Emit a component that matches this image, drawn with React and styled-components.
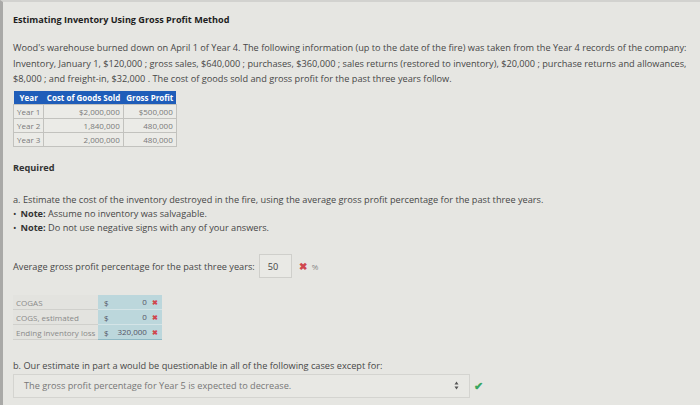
import React from 'react';
import styled, { createGlobalStyle } from 'styled-components';

const GlobalStyle = createGlobalStyle`
  html, body {
    margin: 0;
    padding: 0;
    background: #e4e4e0;
  }
`;

const Page = styled.div`
  width: 700px;
  height: 405px;
  box-sizing: border-box;
  border-left: 3px solid #a9a9a7;
  border-top: 2px solid #d2d2cf;
  padding: 11px 0 0 10px;
  font-family: "Open Sans", "Liberation Sans", sans-serif;
  font-size: 9.2px;
  color: #474747;
  overflow: hidden;
  background: #e6e6e2;
`;

const Title = styled.div`
  font-weight: 700;
  font-size: 9.1px;
  color: #1e1e1e;
  line-height: 14px;
`;

const Para = styled.p`
  margin: ${p => p.$mt || 0}px 0 0;
  line-height: 15.5px;
  color: ${p => p.$dark ? '#333' : '#474747'};
  font-weight: ${p => p.$bold ? 700 : 400};
`;

const DataTable = styled.table`
  border-collapse: collapse;
  margin-top: 4px;
  font-size: 8px;
  line-height: 13px;
`;

const Th = styled.th`
  background: #1f5db9;
  color: #fff;
  font-weight: 700;
  padding: 0 3px;
  text-align: center;
  white-space: nowrap;
`;

const Td = styled.td`
  border: 1px solid #c2c2be;
  background: #ebebe7;
  color: #7a7a7a;
  padding: 0 3px;
  height: 13px;
  text-align: ${p => p.$align || 'left'};
`;

const Notes = styled.div`
  margin-top: 18px;
  line-height: 14px;
`;

const NoteLine = styled.div`
  display: flex;
  gap: 4px;
  &::before {
    content: '•';
    color: #333;
  }
  b { color: #333; }
`;

const AvgRow = styled.div`
  display: flex;
  align-items: center;
  margin-top: 19px;
`;

const InputBox = styled.div`
  width: 33px;
  height: 24px;
  box-sizing: border-box;
  border: 1px solid #cfcfcb;
  background: #e9e9e5;
  margin-left: 4px;
  padding-left: 8px;
  display: flex;
  align-items: center;
  color: #444;
`;

const Mark = styled.span`
  color: ${p => p.$ok ? '#3aa760' : '#d0474f'};
  font-weight: 700;
  font-size: ${p => p.$size || 10}px;
  margin-left: ${p => p.$ml || 0}px;
`;

const Pct = styled.span`
  margin-left: 5px;
  color: #888;
  font-size: 8px;
`;

const CalcTable = styled.table`
  border-collapse: collapse;
  margin-top: 17px;
  font-size: 8px;
  line-height: 13px;
`;

const LabelCell = styled.td`
  background: #e3e3df;
  border-bottom: 1px solid #d0d0cc;
  color: #8a8a8a;
  width: 82px;
  padding: 0 0 0 3px;
  height: 14px;
  white-space: nowrap;
`;

const ValCell = styled.td`
  background: #bcd7dc;
  border-bottom: 1px solid ${p => p.$last ? '#8fb8c4' : '#d4e4e7'};
  color: #556;
  width: 54px;
  padding: 0 4px 0 6px;
  height: 14px;
  & > div {
    display: flex;
    justify-content: space-between;
    align-items: center;
  }
`;

const SelectRow = styled.div`
  display: flex;
  align-items: center;
`;

const SelectBox = styled.div`
  width: 457px;
  height: 24px;
  box-sizing: border-box;
  border: 1px solid #d4d4d0;
  background: #e8e8e4;
  padding: 0 10px 0 10px;
  display: flex;
  align-items: center;
  justify-content: space-between;
  color: #777;
`;

const Arrows = () => (
  <svg width="5" height="9" viewBox="0 0 5 9">
    <path d="M2.5 0.5 L4.5 3.5 L0.5 3.5 Z M2.5 8.5 L4.5 5.5 L0.5 5.5 Z" fill="#555" />
  </svg>
);

const years = [
  ['Year 1', '$2,000,000', '$500,000'],
  ['Year 2', '1,840,000', '480,000'],
  ['Year 3', '2,000,000', '480,000'],
];

const calc = [
  ['COGAS', '0'],
  ['COGS, estimated', '0'],
  ['Ending inventory loss', '320,000'],
];

export default function App() {
  return (
    <>
      <GlobalStyle />
      <Page>
        <Title>Estimating Inventory Using Gross Profit Method</Title>
        <Para $mt={13}>
          Wood's warehouse burned down on April 1 of Year 4. The following information (up to the date of the fire) was taken from the Year 4 records of the company:
          Inventory, January 1, $120,000 ; gross sales, $640,000 ; purchases, $360,000 ; sales returns (restored to inventory), $20,000 ; purchase returns and allowances,
          $8,000 ; and freight-in, $32,000 . The cost of goods sold and gross profit for the past three years follow.
        </Para>
        <DataTable>
          <thead>
            <tr>
              <Th>Year</Th>
              <Th>Cost of Goods Sold</Th>
              <Th>Gross Profit</Th>
            </tr>
          </thead>
          <tbody>
            {years.map(r => (
              <tr key={r[0]}>
                <Td>{r[0]}</Td>
                <Td $align="right">{r[1]}</Td>
                <Td $align="right">{r[2]}</Td>
              </tr>
            ))}
          </tbody>
        </DataTable>
        <Para $mt={13} $bold $dark>Required</Para>
        <Notes>
          <div>a. Estimate the cost of the inventory destroyed in the fire, using the average gross profit percentage for the past three years.</div>
          <NoteLine><span><b>Note:</b> Assume no inventory was salvagable.</span></NoteLine>
          <NoteLine><span><b>Note:</b> Do not use negative signs with any of your answers.</span></NoteLine>
        </Notes>
        <AvgRow>
          <span>Average gross profit percentage for the past three years:</span>
          <InputBox>50</InputBox>
          <Mark $ml={7}>✖</Mark>
          <Pct>%</Pct>
        </AvgRow>
        <CalcTable>
          <tbody>
            {calc.map((r, i) => (
              <tr key={r[0]}>
                <LabelCell>{r[0]}</LabelCell>
                <ValCell $last={i === calc.length - 1}>
                  <div>
                    <span>$</span>
                    <span>{r[1]} <Mark $size={7} $ml={3}>✖</Mark></span>
                  </div>
                </ValCell>
              </tr>
            ))}
          </tbody>
        </CalcTable>
        <Para $mt={18}>b. Our estimate in part a would be questionable in all of the following cases except for:</Para>
        <SelectRow>
          <SelectBox>
            <span>The gross profit percentage for Year 5 is expected to decrease.</span>
            <Arrows />
          </SelectBox>
          <Mark $ok $ml={4} $size={11}>✔</Mark>
        </SelectRow>
      </Page>
    </>
  );
}
